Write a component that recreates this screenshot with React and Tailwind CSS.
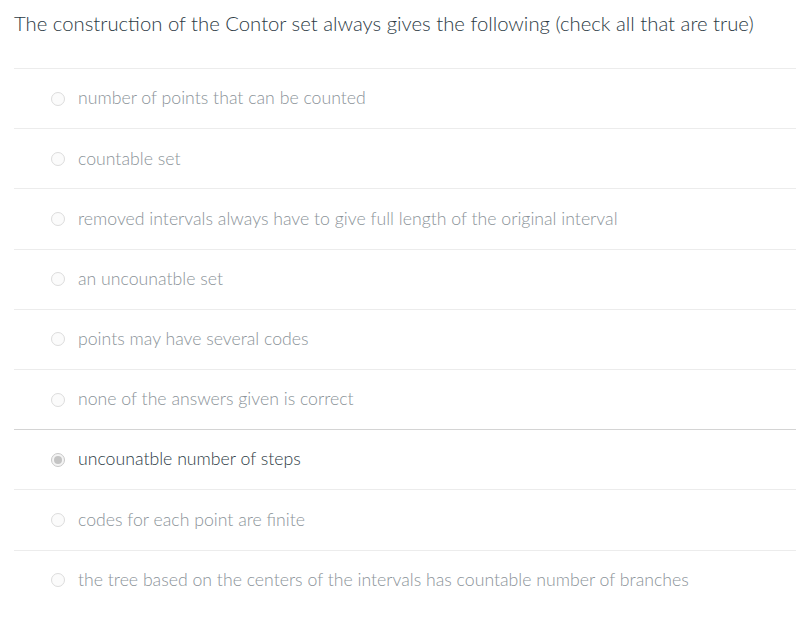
import React from 'react';

const options = [
  { text: 'number of points that can be counted' },
  { text: 'countable set' },
  { text: 'removed intervals always have to give full length of the original interval' },
  { text: 'an uncounatble set' },
  { text: 'points may have several codes' },
  { text: 'none of the answers given is correct' },
  { text: 'uncounatble number of steps', selected: true },
  { text: 'codes for each point are finite' },
  { text: 'the tree based on the centers of the intervals has countable number of branches' },
];

const Radio = ({ selected }) => (
  <span
    className={
      'flex h-[14px] w-[14px] shrink-0 items-center justify-center rounded-full border ' +
      (selected ? 'border-[#c8c8c8] bg-[#f4f4f4]' : 'border-[#dcdcdc] bg-[#fbfbfb]')
    }
  >
    {selected && <span className="h-[8px] w-[8px] rounded-full bg-[#c4c4c4]" />}
  </span>
);

const App = () => {
  return (
    <div className="min-h-screen bg-white pl-[14px] font-['Lato','Liberation_Sans',sans-serif]">
      <h1 className="pt-[10px] text-[20.3px] font-light leading-[26px] text-[#2d3b45]">
        The construction of the Contor set always gives the following (check all that are true)
      </h1>
      <div className="mt-[32px]">
        {options.map((o, i) => (
          <div
            key={i}
            className={
              'flex h-[60.2px] items-center gap-[13px] border-t pl-[37px] ' +
              (o.selected ? 'border-[#d4d4d4]' : 'border-[#ececec]')
            }
          >
            <Radio selected={o.selected} />
            <span
              className={
                'text-[17.7px] font-light ' + (o.selected ? 'text-[#2d3b45]' : 'text-[#8b9399]')
              }
            >
              {o.text}
            </span>
          </div>
        ))}
      </div>
    </div>
  );
};

export default App;
